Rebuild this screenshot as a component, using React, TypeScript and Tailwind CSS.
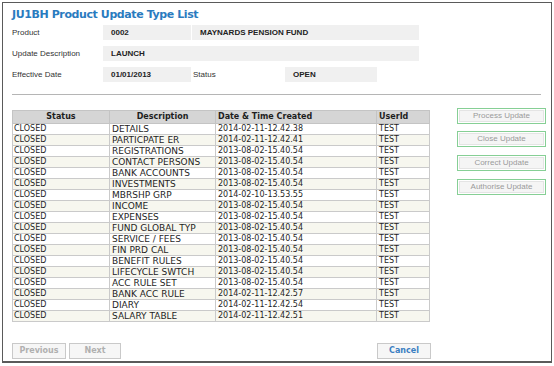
import React from 'react';

const rows: [string, string, string, string][] = [
  ['CLOSED', 'DETAILS', '2014-02-11-12.42.38', 'TEST'],
  ['CLOSED', 'PARTICPATE ER', '2014-02-11-12.42.41', 'TEST'],
  ['CLOSED', 'REGISTRATIONS', '2013-08-02-15.40.54', 'TEST'],
  ['CLOSED', 'CONTACT PERSONS', '2013-08-02-15.40.54', 'TEST'],
  ['CLOSED', 'BANK ACCOUNTS', '2013-08-02-15.40.54', 'TEST'],
  ['CLOSED', 'INVESTMENTS', '2013-08-02-15.40.54', 'TEST'],
  ['CLOSED', 'MBRSHP GRP', '2014-02-10-13.53.55', 'TEST'],
  ['CLOSED', 'INCOME', '2013-08-02-15.40.54', 'TEST'],
  ['CLOSED', 'EXPENSES', '2013-08-02-15.40.54', 'TEST'],
  ['CLOSED', 'FUND GLOBAL TYP', '2013-08-02-15.40.54', 'TEST'],
  ['CLOSED', 'SERVICE / FEES', '2013-08-02-15.40.54', 'TEST'],
  ['CLOSED', 'FIN PRD CAL', '2013-08-02-15.40.54', 'TEST'],
  ['CLOSED', 'BENEFIT RULES', '2013-08-02-15.40.54', 'TEST'],
  ['CLOSED', 'LIFECYCLE SWTCH', '2013-08-02-15.40.54', 'TEST'],
  ['CLOSED', 'ACC RULE SET', '2013-08-02-15.40.54', 'TEST'],
  ['CLOSED', 'BANK ACC RULE', '2014-02-11-12.42.57', 'TEST'],
  ['CLOSED', 'DIARY', '2014-02-11-12.42.54', 'TEST'],
  ['CLOSED', 'SALARY TABLE', '2014-02-11-12.42.51', 'TEST'],
];

const actions = ['Process Update', 'Close Update', 'Correct Update', 'Authorise Update'];

function Field({ children, className }: { children?: React.ReactNode; className: string }) {
  return (
    <div className={`h-[15px] bg-[#f0f0f0] pl-[8px] flex items-center font-bold text-[8px] text-[#222] ${className}`}>
      {children}
    </div>
  );
}

function ActionButton({ label }: { label: string }) {
  return (
    <div className="w-[89px] h-[16px] border border-[#86cf95] p-[1px]">
      <div className="h-full bg-[#f5f5f5] border border-[#e4e4e4] flex items-center justify-center text-[8px] text-[#9a9a9a]">
        {label}
      </div>
    </div>
  );
}

export default function App() {
  return (
    <div className="w-[554px] h-[366px] bg-white pl-[2px] pt-[2px]" style={{ fontFamily: '"Liberation Sans", Arial, sans-serif' }}>
      <div className="w-[550px] h-[361px] border border-[#5a5a5a] border-b-2 pl-[9px] pr-[9px] pt-[4px] flex flex-col">
        <h1
          className="text-[#2a7bbf] font-bold text-[11px] leading-[16px] tracking-[-0.4px]"
          style={{ fontFamily: '"DejaVu Sans", Verdana, sans-serif' }}
        >
          JU1BH Product Update Type List
        </h1>

        <div className="flex flex-col gap-[6px] mt-[2px] text-[8px] text-[#333]">
          <div className="flex items-center">
            <span className="w-[91px]">Product</span>
            <Field className="w-[88px]">0002</Field>
            <Field className="w-[227px] ml-[1px] pl-[6px]">MAYNARDS PENSION FUND</Field>
          </div>
          <div className="flex items-center">
            <span className="w-[91px]">Update Description</span>
            <Field className="w-[316px]">LAUNCH</Field>
          </div>
          <div className="flex items-center">
            <span className="w-[91px]">Effective Date</span>
            <Field className="w-[88px]">01/01/2013</Field>
            <span className="w-[94px] pl-[2px]">Status</span>
            <Field className="w-[92px]">OPEN</Field>
          </div>
        </div>

        <div className="mt-[12px] border-t border-[#b5b5b5] w-[529px]" />

        <div className="flex mt-[15px]">
          <table
            className="w-[417px] border-collapse table-fixed text-[8px] text-[#1e1e1e]"
            style={{ fontFamily: '"DejaVu Sans", Verdana, sans-serif' }}
          >
            <colgroup>
              <col className="w-[97px]" />
              <col className="w-[106px]" />
              <col className="w-[161px]" />
              <col className="w-[53px]" />
            </colgroup>
            <thead>
              <tr className="h-[12px] bg-[#d5d5d5] font-bold">
                <th className="border border-[#c4c4c4] text-center font-bold p-0">Status</th>
                <th className="border border-[#c4c4c4] text-center font-bold p-0">Description</th>
                <th className="border border-[#c4c4c4] text-left font-bold pl-[2px] py-0">Date &amp; Time Created</th>
                <th className="border border-[#c4c4c4] text-left font-bold pl-[2px] py-0">UserId</th>
              </tr>
            </thead>
            <tbody>
              {rows.map((r, i) => (
                <tr key={i} className={i % 2 === 1 ? 'h-[11px] bg-[#f7f7ef]' : 'h-[11px] bg-white'}>
                  <td className="border border-[#cacaca] pl-[1px] py-0 leading-[10px]">{r[0]}</td>
                  <td className="border border-[#cacaca] pl-[2px] py-0 leading-[10px] text-[9px]">{r[1]}</td>
                  <td className="border border-[#cacaca] pl-[2px] py-0 leading-[10px]">{r[2]}</td>
                  <td className="border border-[#cacaca] pl-[2px] py-0 leading-[10px]">{r[3]}</td>
                </tr>
              ))}
            </tbody>
          </table>

          <div className="ml-[27px] flex flex-col">
            <div className="mt-[-2px]"><ActionButton label={actions[0]} /></div>
            <div className="mt-[7px]"><ActionButton label={actions[1]} /></div>
            <div className="mt-[8px]"><ActionButton label={actions[2]} /></div>
            <div className="mt-[8px]"><ActionButton label={actions[3]} /></div>
          </div>
        </div>

        <div
          className="flex mt-auto mb-[2px] w-[419px] text-[8px] font-bold"
          style={{ fontFamily: '"DejaVu Sans", Verdana, sans-serif' }}
        >
          <div className="w-[54px] h-[16px] border border-[#c9c9c9] bg-[#f6f6f6] flex items-center justify-center text-[#b0b0b0]">
            Previous
          </div>
          <div className="w-[52px] h-[16px] ml-[3px] border border-[#c9c9c9] bg-[#f6f6f6] flex items-center justify-center text-[#b0b0b0]">
            Next
          </div>
          <div className="w-[54px] h-[16px] ml-auto border border-[#c9c9c9] bg-[#f6f6f6] flex items-center justify-center text-[#3b7fc2]">
            Cancel
          </div>
        </div>
      </div>
    </div>
  );
}
